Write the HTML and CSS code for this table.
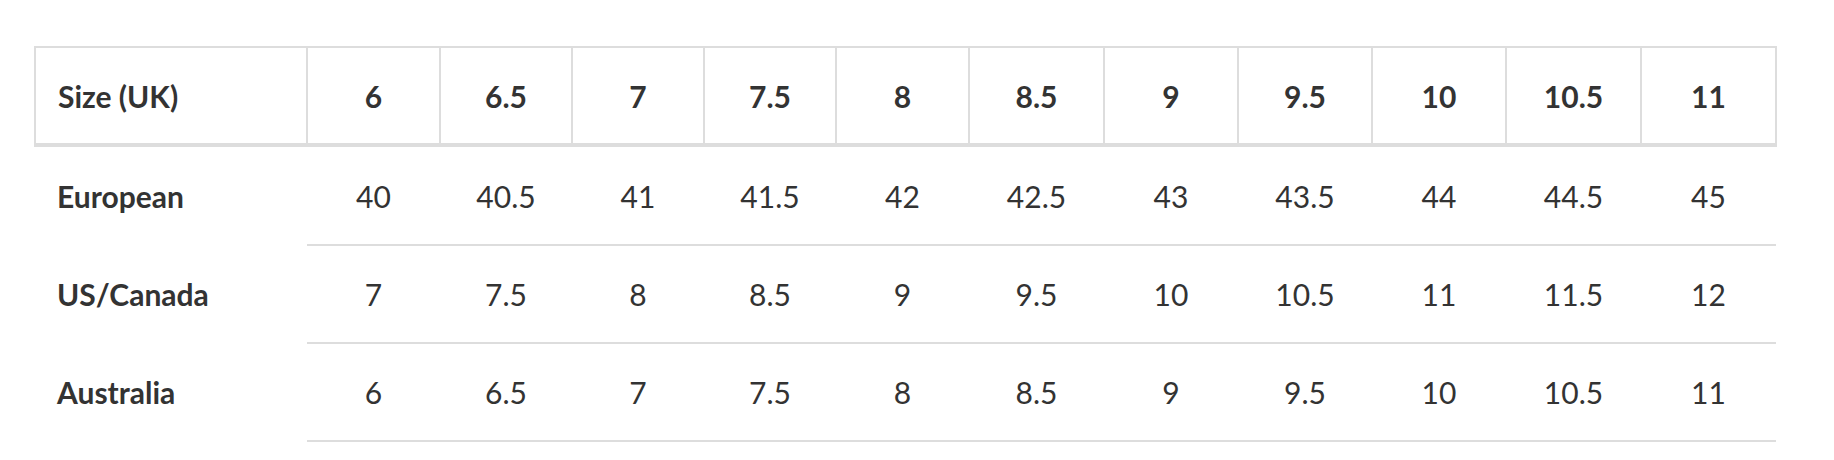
FILE: index.html
```html
<!DOCTYPE html>
<html>
<head>
<meta charset="utf-8">
<link rel="stylesheet" href="styles.css">
</head>
<body>
<div class="wrap">
<table class="size-table">
  <colgroup>
    <col class="c-label">
    <col class="c-a"><col class="c-b"><col class="c-b"><col class="c-b"><col class="c-a">
    <col class="c-c"><col class="c-d"><col class="c-d"><col class="c-d"><col class="c-c"><col class="c-c">
  </colgroup>
  <thead>
    <tr>
      <th class="label">Size (UK)</th>
      <th>6</th><th>6.5</th><th>7</th><th>7.5</th><th>8</th><th>8.5</th><th>9</th><th>9.5</th><th>10</th><th>10.5</th><th>11</th>
    </tr>
  </thead>
  <tbody>
    <tr class="first">
      <th class="label">European</th>
      <td>40</td><td>40.5</td><td>41</td><td>41.5</td><td>42</td><td>42.5</td><td>43</td><td>43.5</td><td>44</td><td>44.5</td><td>45</td>
    </tr>
    <tr>
      <th class="label">US/Canada</th>
      <td>7</td><td>7.5</td><td>8</td><td>8.5</td><td>9</td><td>9.5</td><td>10</td><td>10.5</td><td>11</td><td>11.5</td><td>12</td>
    </tr>
    <tr>
      <th class="label">Australia</th>
      <td>6</td><td>6.5</td><td>7</td><td>7.5</td><td>8</td><td>8.5</td><td>9</td><td>9.5</td><td>10</td><td>10.5</td><td>11</td>
    </tr>
  </tbody>
</table>
</div>
</body>
</html>
```

FILE: styles.css
```css
html, body {
  margin: 0;
  padding: 0;
  background: #fff;
}

.wrap {
  padding: 46px 56px 0 34px;
}

.size-table {
  width: 1743px;
  table-layout: fixed;
  border-collapse: collapse;
  font-family: Lato, "Open Sans", sans-serif;
  font-size: 30px;
  color: #333;
}

.c-label { width: 272px; }
.c-a { width: 133px; }
.c-b { width: 132px; }
.c-c { width: 135px; }
.c-d { width: 134px; }

.size-table thead th {
  border: 2px solid #ddd;
  border-bottom: 4px solid #ddd;
  height: 95px;
  padding: 0;
  font-weight: 700;
  text-align: center;
}

.size-table thead th.label {
  text-align: left;
  padding-left: 22px;
}

.size-table tbody th.label {
  text-align: left;
  padding-left: 22px;
  font-weight: 700;
  border: none;
}

.size-table tbody td {
  height: 96px;
  padding: 0;
  text-align: center;
  font-weight: 400;
  border-bottom: 2px solid #ddd;
}

.size-table tbody tr.first td {
  height: 97px;
}
```
